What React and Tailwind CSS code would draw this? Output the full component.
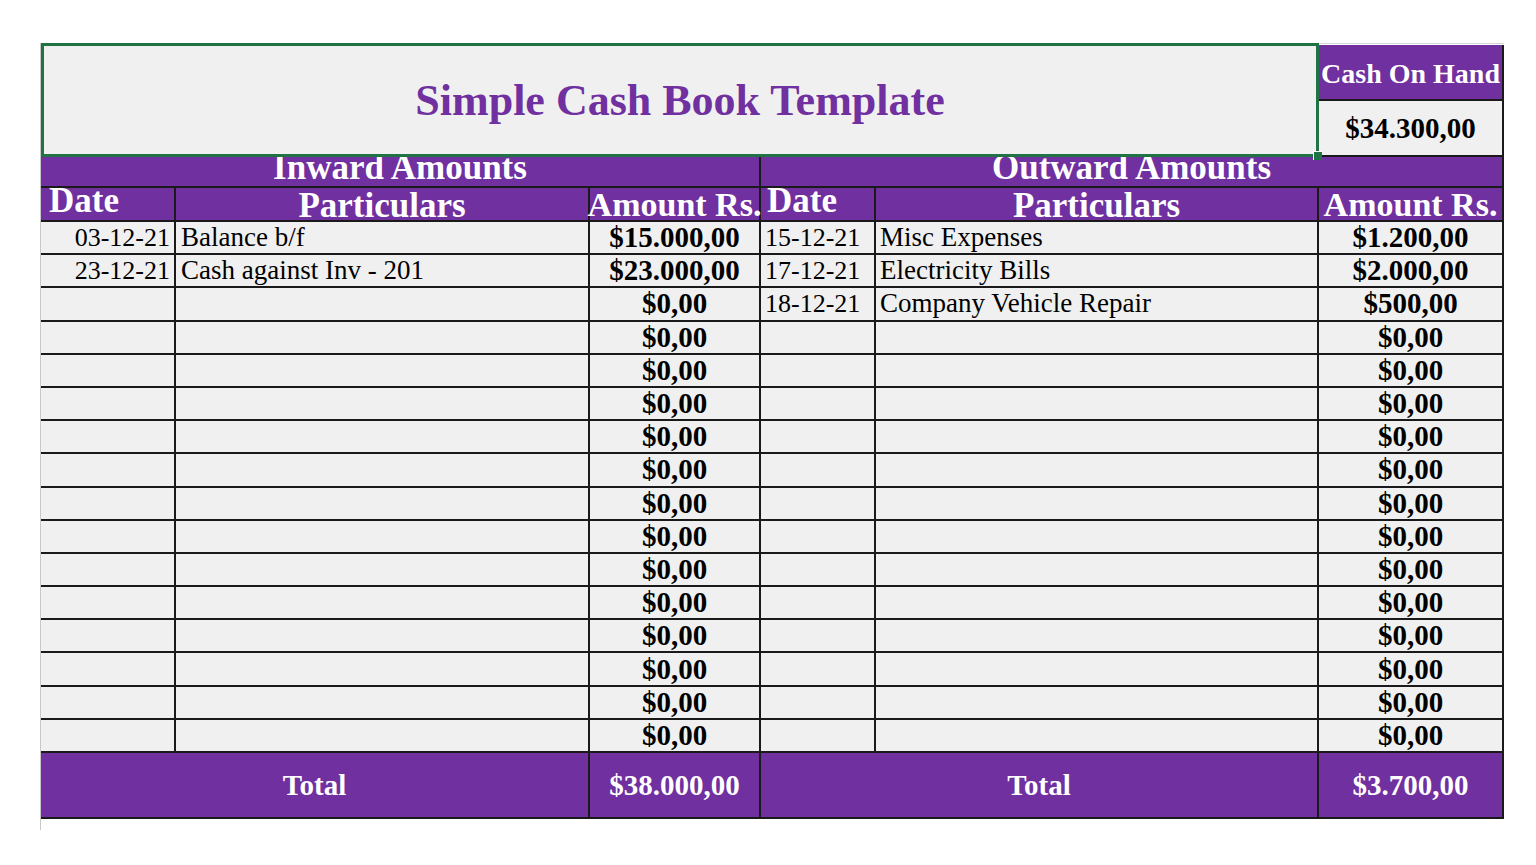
import React from 'react';

const cols = 'grid grid-cols-[135px_414px_171px_115px_443px_185px]';

const inward = [
  ['03-12-21', 'Balance b/f', '$15.000,00'],
  ['23-12-21', 'Cash against Inv - 201', '$23.000,00'],
];
const outward = [
  ['15-12-21', 'Misc Expenses', '$1.200,00'],
  ['17-12-21', 'Electricity Bills', '$2.000,00'],
  ['18-12-21', 'Company Vehicle Repair', '$500,00'],
];

const rows = Array.from({ length: 16 }, (_, i) => ({
  inn: inward[i] || ['', '', '$0,00'],
  out: outward[i] || ['', '', '$0,00'],
}));

function DataRow({ inn, out }) {
  const cell = 'h-[33.2px] border-r-2 border-b-2 border-[#1a1a1a] flex items-center leading-none overflow-hidden whitespace-nowrap';
  return (
    <div className={cols}>
      <div className={`${cell} justify-end pr-[4px] text-[26px]`}>{inn[0]}</div>
      <div className={`${cell} pl-[5px] text-[27px]`}>{inn[1]}</div>
      <div className={`${cell} justify-center font-bold text-[29px]`}>{inn[2]}</div>
      <div className={`${cell} pl-[4px] text-[26px]`}>{out[0]}</div>
      <div className={`${cell} pl-[4px] text-[27px]`}>{out[1]}</div>
      <div className={`${cell} justify-center font-bold text-[29px]`}>{out[2]}</div>
    </div>
  );
}

export default function App() {
  return (
    <div className="min-h-screen bg-white pt-[43px] pl-[40px] font-['Liberation_Serif','Times_New_Roman',serif] text-black">
      <div className="w-[1464px] border-l border-[#c8c8c8] pb-[11px]">
        {/* title + cash on hand */}
        <div className="flex">
          <div className="relative w-[1278px] h-[114px] border-[3px] border-[#217346] bg-[#f0f0f0] flex items-center justify-center">
            <h1 className="text-[44px] font-bold text-[#7030a0] leading-none mt-[2px]">Simple Cash Book Template</h1>
            <div className="absolute -right-[6px] -bottom-[6px] w-[9px] h-[9px] bg-[#217346] border-l border-t border-white z-10" />
          </div>
          <div className="w-[185px] flex flex-col border-t border-[#d4d4d4]">
            <div className="h-[56px] mt-[1px] bg-[#7030a0] border-r-2 border-b-2 border-[#1a1a1a] flex items-center justify-center pt-[4px] text-white font-bold text-[28px] leading-none whitespace-nowrap">
              Cash On Hand
            </div>
            <div className="h-[56px] bg-[#f0f0f0] border-r-2 border-b-2 border-[#1a1a1a] flex items-center justify-center font-bold text-[29px] leading-none">
              $34.300,00
            </div>
          </div>
        </div>

        {/* section titles */}
        <div className={`${cols} bg-[#7030a0] text-white font-bold text-[35px]`}>
          <div className="col-span-3 h-[31px] border-r-2 border-b-2 border-[#1a1a1a] flex items-end justify-center pb-[5px] leading-[26px] overflow-hidden">
            Inward Amounts
          </div>
          <div className="col-span-3 h-[31px] border-r-2 border-b-2 border-[#1a1a1a] flex items-end justify-center pb-[5px] leading-[26px] overflow-hidden">
            Outward Amounts
          </div>
        </div>

        {/* column headers */}
        <div className={`${cols} bg-[#7030a0] text-white font-bold leading-[26px]`}>
          <div className="h-[34px] border-r-2 border-b-2 border-[#1a1a1a] pl-[8px] text-[35px] whitespace-nowrap">Date</div>
          <div className="h-[34px] border-r-2 border-b-2 border-[#1a1a1a] flex items-end justify-center pb-[1px] text-[35px] whitespace-nowrap">Particulars</div>
          <div className="h-[34px] border-r-2 border-b-2 border-[#1a1a1a] flex items-end justify-center pb-[2px] text-[34px] whitespace-nowrap">Amount Rs.</div>
          <div className="h-[34px] border-r-2 border-b-2 border-[#1a1a1a] pl-[6px] text-[35px] whitespace-nowrap">Date</div>
          <div className="h-[34px] border-r-2 border-b-2 border-[#1a1a1a] flex items-end justify-center pb-[1px] text-[35px] whitespace-nowrap">Particulars</div>
          <div className="h-[34px] border-r-2 border-b-2 border-[#1a1a1a] flex items-end justify-center pb-[2px] text-[34px] whitespace-nowrap">Amount Rs.</div>
        </div>

        {/* data */}
        <div className="bg-[#f0f0f0]">
          {rows.map((r, i) => (
            <DataRow key={i} inn={r.inn} out={r.out} />
          ))}
        </div>

        {/* totals */}
        <div className={`${cols} bg-[#7030a0] text-white font-bold text-[29px] leading-none`}>
          <div className="col-span-2 h-[66px] border-r-2 border-b-2 border-[#1a1a1a] flex items-center justify-center">Total</div>
          <div className="h-[66px] border-r-2 border-b-2 border-[#1a1a1a] flex items-center justify-center">$38.000,00</div>
          <div className="col-span-2 h-[66px] border-r-2 border-b-2 border-[#1a1a1a] flex items-center justify-center">Total</div>
          <div className="h-[66px] border-r-2 border-b-2 border-[#1a1a1a] flex items-center justify-center">$3.700,00</div>
        </div>
      </div>
    </div>
  );
}
